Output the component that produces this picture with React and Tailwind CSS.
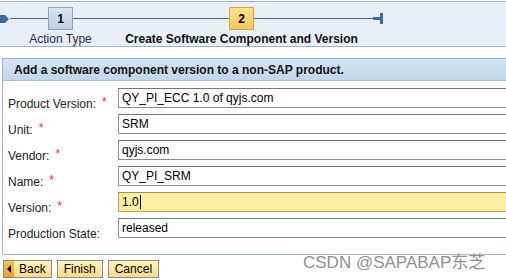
import React from 'react';

const fields = [
  { label: 'Product Version:', required: true, value: 'QY_PI_ECC 1.0 of qyjs.com' },
  { label: 'Unit:', required: true, value: 'SRM' },
  { label: 'Vendor:', required: true, value: 'qyjs.com' },
  { label: 'Name:', required: true, value: 'QY_PI_SRM' },
  { label: 'Version:', required: true, value: '1.0', active: true },
  { label: 'Production State:', required: false, value: 'released' },
];

const Line = ({ width }) => <div className="h-px bg-[#3b6b9c] mt-[16px]" style={{ width }} />;

const Step = ({ num, label, current }) => (
  <div className="relative">
    <div
      className={
        current
          ? 'w-[25px] h-[23px] mt-[5px] border border-[#dba23a] bg-gradient-to-b from-[#fde08e] to-[#f7c65a] flex items-center justify-center text-[12px] font-bold text-black'
          : 'w-[25px] h-[23px] mt-[5px] border border-[#8aa5c2] bg-gradient-to-b from-[#d8e5f2] to-[#bcd0e6] flex items-center justify-center text-[12px] font-bold text-black'
      }
    >
      {num}
    </div>
    <div
      className={
        current
          ? 'absolute top-[30px] left-1/2 -translate-x-1/2 whitespace-nowrap text-[12px] leading-[14px] font-bold text-[#111]'
          : 'absolute top-[30px] left-1/2 -translate-x-1/2 whitespace-nowrap text-[12px] leading-[14px] text-[#2b2650]'
      }
    >
      {label}
    </div>
  </div>
);

const Field = ({ label, required, value, active }) => (
  <div className="flex items-start h-[20px]">
    <div className="w-[110px] pt-[9px] text-[12px] leading-[14px] text-[#222] whitespace-nowrap">
      {label}
      {required && <span className="ml-[6px] text-[#e0341f] text-[12px] relative -top-[2px]">*</span>}
    </div>
    <div
      className={
        active
          ? 'flex-1 h-[20px] border border-[#cf9c45] border-t-[#b88a3c] bg-[#ffeda2] pl-[3px] flex items-center text-[12px] text-black'
          : 'flex-1 h-[20px] border border-[#8e8e8e] border-t-[#777] bg-white pl-[3px] flex items-center text-[12px] text-black'
      }
    >
      {value}
      {active && <span className="w-px h-[14px] bg-black ml-px" />}
    </div>
  </div>
);

const Button = ({ children, back }) => (
  <button className="h-[18px] border border-[#8a8a8a] bg-gradient-to-b from-[#fff2bd] to-[#f8dc84] flex items-stretch text-[12px] leading-none text-black">
    {back && (
      <span className="w-[10px] bg-gradient-to-b from-[#f9c24e] to-[#ee9f22] flex items-center justify-center">
        <span className="w-0 h-0 border-y-[4px] border-y-transparent border-r-[4px] border-r-black" />
      </span>
    )}
    <span className={back ? 'px-[5px] flex items-center' : 'px-[6px] flex items-center'}>{children}</span>
  </button>
);

export default function App() {
  return (
    <div className="relative w-[506px] h-[280px] overflow-hidden bg-white font-['Liberation_Sans',Arial,sans-serif]">
      {/* roadmap */}
      <div className="mt-px h-[46px] border-y border-[#9fb3c8] bg-[#e8eff7] flex items-start">
        <svg width="10" height="34" className="shrink-0">
          <path d="M0 13 H5 L9 17 L5 21 H0 Z" fill="#3b6b9c" />
        </svg>
        <Line width={38} />
        <Step num="1" label="Action Type" />
        <Line width={156} />
        <Step num="2" label="Create Software Component and Version" current />
        <Line width={119} />
        <svg width="10" height="34" className="shrink-0">
          <rect x="0" y="15" width="8" height="3" fill="#3b6b9c" />
          <rect x="7" y="11" width="3" height="11" fill="#3b6b9c" />
        </svg>
      </div>

      {/* panel */}
      <div className="mt-[11px] ml-[2px] w-[540px] border border-[#9db4cb]">
        <div className="h-[22px] border-b border-[#a9c0d6] bg-gradient-to-b from-[#d3e3f2] to-[#c2d7eb] pl-[11px] flex items-center text-[12px] font-bold text-[#111]">
          Add a software component version to a non-SAP product.
        </div>
        <div className="pl-[5px] pt-[7px] pb-[16px] flex flex-col gap-[6px]">
          {fields.map((f) => (
            <Field key={f.label} {...f} />
          ))}
        </div>
      </div>

      {/* buttons */}
      <div className="mt-[5px] ml-[3px] flex gap-[5px]">
        <Button back>Back</Button>
        <Button>Finish</Button>
        <Button>Cancel</Button>
      </div>

      <div className="absolute left-[303px] top-[253px] text-[17px] leading-[20px] text-[#8f8f8f] font-['Liberation_Sans','Noto_Sans_CJK_SC',sans-serif] [text-shadow:0_0_2px_#fff]">
        CSDN @SAPABAP东芝
      </div>
    </div>
  );
}
